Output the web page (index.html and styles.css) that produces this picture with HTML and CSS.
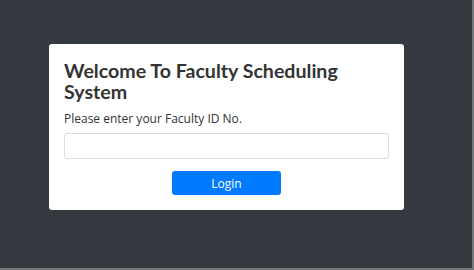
FILE: index.html
```html
<!DOCTYPE html>
<html>
<head>
<meta charset="utf-8">
<link rel="stylesheet" href="styles.css">
</head>
<body>
<div class="screen">
  <div class="card">
    <h1 class="title">Welcome To Faculty Scheduling System</h1>
    <p class="label">Please enter your Faculty ID No.</p>
    <input class="field" type="text">
    <div class="actions">
      <button class="btn">Login</button>
    </div>
  </div>
</div>
</body>
</html>
```
FILE: styles.css
```css
html, body {
  margin: 0;
  padding: 0;
  background: #75797e;
  height: 100%;
}
.screen {
  width: 472px;
  height: 268px;
  background: #343a40;
  padding: 44px 0 0 49px;
  box-sizing: border-box;
}
.card {
  width: 355px;
  height: 166px;
  box-sizing: border-box;
  background: #fff;
  border-radius: 3px;
  padding: 15px;
  display: flex;
  flex-direction: column;
}
.title {
  margin: 0;
  font-family: "Lato", "Open Sans", sans-serif;
  font-weight: 700;
  font-size: 19.6px;
  line-height: 21px;
  color: #333;
  padding-top: 1px;
}
.label {
  margin: 8px 0 0;
  font-family: "Open Sans", sans-serif;
  font-size: 12px;
  line-height: 17px;
  color: #333;
}
.field {
  margin-top: 6px;
  height: 27px;
  box-sizing: border-box;
  border: 1px solid #dcdcdc;
  border-radius: 3px;
  width: 100%;
  background: #fff;
  outline: none;
}
.actions {
  margin-top: 12px;
  display: flex;
  padding-left: 108px;
}
.btn {
  width: 109px;
  height: 24px;
  background: #007bff;
  color: #fff;
  border: none;
  border-radius: 3px;
  font-family: "Open Sans", sans-serif;
  font-size: 12px;
  padding: 0;
}
```
